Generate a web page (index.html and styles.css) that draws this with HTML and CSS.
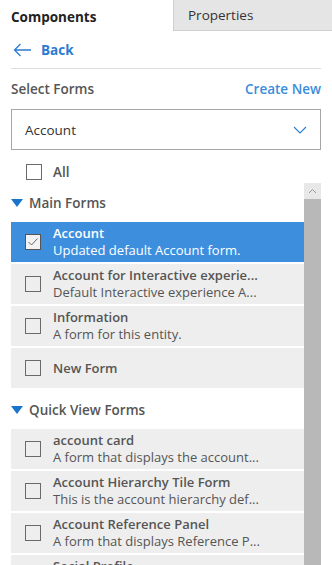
FILE: index.html
```html
<!DOCTYPE html>
<html>
<head>
<meta charset="utf-8">
<link rel="stylesheet" href="styles.css">
</head>
<body>
<div class="tabs">
  <div class="tab tab-active">Components</div>
  <div class="tab tab-idle">Properties</div>
</div>
<div class="back">
  <svg class="back-arrow" width="19" height="14" viewBox="0 0 19 14"><path d="M18 7H1.5M7.5 1L1.5 7l6 6" fill="none" stroke="#2b7bd0" stroke-width="1.3"/></svg>
  <span>Back</span>
</div>
<div class="select-head">
  <span class="select-label">Select Forms</span>
  <span class="create">Create New</span>
</div>
<div class="dropdown">
  <span>Account</span>
  <svg width="14" height="8" viewBox="0 0 14 8"><path d="M1 1l6 6 6-6" fill="none" stroke="#2b7bd0" stroke-width="1.1"/></svg>
</div>
<div class="all-row">
  <span class="box"></span>
  <span class="all-text">All</span>
</div>
<div class="list">
  <div class="list-content">
    <div class="section"><span class="tri"></span>Main Forms</div>
    <div class="item selected">
      <span class="box checked"><svg width="12" height="10" viewBox="0 0 12 10"><path d="M1.5 5l3 3 6-6.5" fill="none" stroke="#666" stroke-width="1"/></svg></span>
      <div class="texts"><div class="title">Account</div><div class="desc">Updated default Account form.</div></div>
    </div>
    <div class="item">
      <span class="box"></span>
      <div class="texts"><div class="title">Account for Interactive experie...</div><div class="desc">Default Interactive experience A...</div></div>
    </div>
    <div class="item">
      <span class="box"></span>
      <div class="texts"><div class="title">Information</div><div class="desc">A form for this entity.</div></div>
    </div>
    <div class="item">
      <span class="box"></span>
      <div class="texts"><div class="title">New Form</div></div>
    </div>
    <div class="section"><span class="tri"></span>Quick View Forms</div>
    <div class="item">
      <span class="box"></span>
      <div class="texts"><div class="title">account card</div><div class="desc">A form that displays the account...</div></div>
    </div>
    <div class="item">
      <span class="box"></span>
      <div class="texts"><div class="title">Account Hierarchy Tile Form</div><div class="desc">This is the account hierarchy def...</div></div>
    </div>
    <div class="item">
      <span class="box"></span>
      <div class="texts"><div class="title">Account Reference Panel</div><div class="desc">A form that displays Reference P...</div></div>
    </div>
    <div class="item">
      <span class="box"></span>
      <div class="texts"><div class="title">Social Profile</div><div class="desc">A form for this entity.</div></div>
    </div>
  </div>
  <div class="scrollbar">
    <div class="sb-up"><svg width="9" height="6" viewBox="0 0 9 6"><path d="M1 5l3.5-3.5L8 5" fill="none" stroke="#999" stroke-width="1"/></svg></div>
    <div class="sb-thumb"></div>
  </div>
</div>
</body>
</html>
```
FILE: styles.css
```css
html, body {
  margin: 0;
  padding: 0;
  background: #fff;
  height: 565px;
  overflow: hidden;
}
body {
  font-family: "Open Sans", "Noto Sans", sans-serif;
  font-size: 13px;
  color: #444;
}
.tabs {
  display: flex;
  height: 31px;
}
.tab {
  display: flex;
  align-items: center;
  box-sizing: border-box;
}
.tab-active {
  width: 173px;
  padding-left: 11px;
  font-weight: 700;
  font-size: 13.5px;
  color: #222;
  padding-top: 3px;
}
.tab-idle {
  flex: 1;
  background: #e5e5e5;
  border-left: 1px solid #d0d0d0;
  border-bottom: 1px solid #d0d0d0;
  padding-left: 14px;
  font-size: 13.5px;
  color: #333;
}
.back {
  margin: 0 11px;
  height: 37px;
  border-bottom: 1px solid #ddd;
  display: flex;
  align-items: center;
  gap: 9px;
  color: #2b7bd0;
  font-weight: 700;
  font-size: 13.5px;
}
.back-arrow {
  margin-left: 2px;
}
.select-head {
  margin: 0 11px;
  height: 40px;
  display: flex;
  align-items: center;
  justify-content: space-between;
  font-weight: 600;
  font-size: 13.5px;
}
.select-label { color: #555; }
.create { color: #3b8ddb; }
.dropdown {
  margin: 0 11px;
  height: 41px;
  box-sizing: border-box;
  border: 1px solid #a6a6a6;
  display: flex;
  align-items: center;
  justify-content: space-between;
  padding: 0 13px 0 13px;
  font-size: 13.5px;
  color: #333;
}
.all-row {
  margin: 14px 0 3px 26px;
  height: 16px;
  display: flex;
  align-items: center;
  gap: 11px;
  font-weight: 600;
  font-size: 13.5px;
  color: #555;
}
.box {
  width: 16px;
  height: 16px;
  box-sizing: border-box;
  border: 1px solid #6a6a6a;
  flex: none;
  display: flex;
  align-items: center;
  justify-content: center;
}
.box.checked {
  background: #f2f2f2;
  border-color: #555;
}
.list {
  margin: 0 11px;
  display: flex;
  height: 382px;
}
.list-content {
  flex: 1;
  overflow: hidden;
}
.section {
  height: 39px;
  display: flex;
  align-items: center;
  gap: 6px;
  font-weight: 600;
  font-size: 13.5px;
  color: #555;
}
.tri {
  width: 0;
  height: 0;
  border-left: 6.5px solid transparent;
  border-right: 6.5px solid transparent;
  border-top: 8px solid #1a74cc;
  margin-top: 1px;
}
.item {
  height: 40px;
  margin-bottom: 2px;
  background: #eeeeee;
  display: flex;
  align-items: center;
  padding-left: 14px;
  gap: 12px;
  white-space: nowrap;
}
.item.selected {
  background: #3d8fde;
}
.item.selected .title,
.item.selected .desc {
  color: #fff;
}
.texts {
  line-height: 17px;
}
.title {
  font-weight: 600;
  color: #555;
}
.desc {
  color: #555;
}
.scrollbar {
  width: 17px;
  flex: none;
  display: flex;
  flex-direction: column;
}
.sb-up {
  height: 16px;
  background: #e8e8e8;
  display: flex;
  align-items: center;
  justify-content: center;
}
.sb-thumb {
  flex: 1;
  background: #b8b8b8;
}
```
